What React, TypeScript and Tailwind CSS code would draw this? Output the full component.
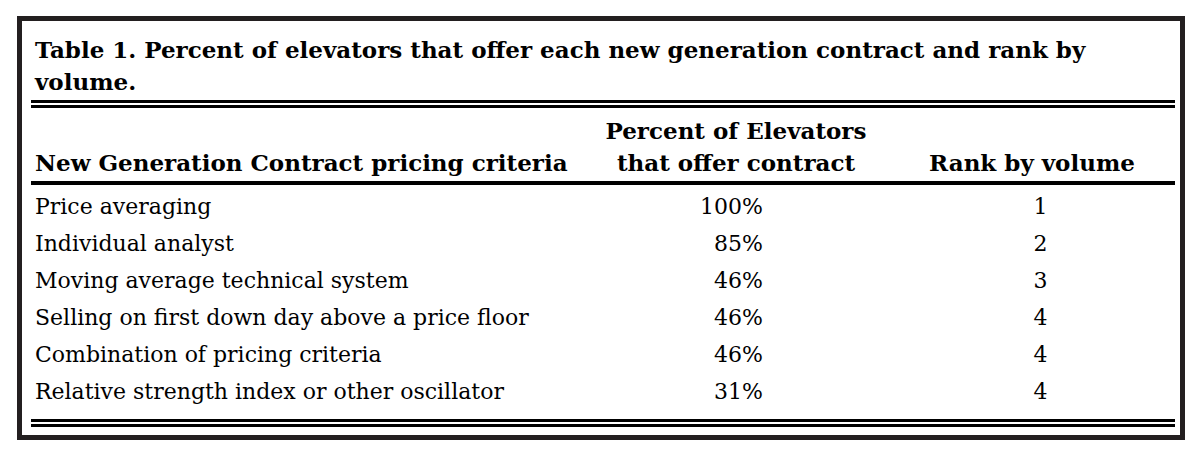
const rows = [
  { label: 'Price averaging', pct: '100%', rank: '1' },
  { label: 'Individual analyst', pct: '85%', rank: '2' },
  { label: 'Moving average technical system', pct: '46%', rank: '3' },
  { label: 'Selling on first down day above a price floor', pct: '46%', rank: '4' },
  { label: 'Combination of pricing criteria', pct: '46%', rank: '4' },
  { label: 'Relative strength index or other oscillator', pct: '31%', rank: '4' },
];

function DoubleRule() {
  return (
    <div className="flex flex-col gap-[2px]">
      <div className="h-[3px] bg-black" />
      <div className="h-[3px] bg-black" />
    </div>
  );
}

export default function App() {
  return (
    <div className="w-[1198px] h-[458px] bg-white pt-[16px] pl-[17px] font-['DejaVu_Serif',serif] text-black">
      <div className="w-[1168px] h-[424px] border-[5px] border-[#231f20] pl-[9px] pr-[5px]">
        <h2 className="pt-[13px] pl-[4px] text-[23px] leading-[32px] font-bold whitespace-nowrap">
          Table 1. Percent of elevators that offer each new generation contract and rank by
          <br />
          volume.
        </h2>
        <div className="mt-[2px]">
          <DoubleRule />
        </div>

        <div className="grid grid-cols-[559px_292px_293px] items-end pt-[7px] pb-[2px] text-[23px] leading-[32px] font-bold">
          <div className="pl-[4px] whitespace-nowrap">New Generation Contract pricing criteria</div>
          <div className="text-center">
            Percent of Elevators
            <br />
            that offer contract
          </div>
          <div className="text-center pl-[7px]">Rank by volume</div>
        </div>
        <div className="h-[4px] bg-black" />

        <div className="pt-[3px] pb-[9px] text-[22px] leading-[37px]">
          {rows.map((r) => (
            <div key={r.label} className="grid grid-cols-[559px_292px_293px]">
              <div className="pl-[4px] whitespace-nowrap">{r.label}</div>
              <div className="text-right pr-[119px]">{r.pct}</div>
              <div className="text-center pl-[24px]">{r.rank}</div>
            </div>
          ))}
        </div>
        <DoubleRule />
      </div>
    </div>
  );
}
